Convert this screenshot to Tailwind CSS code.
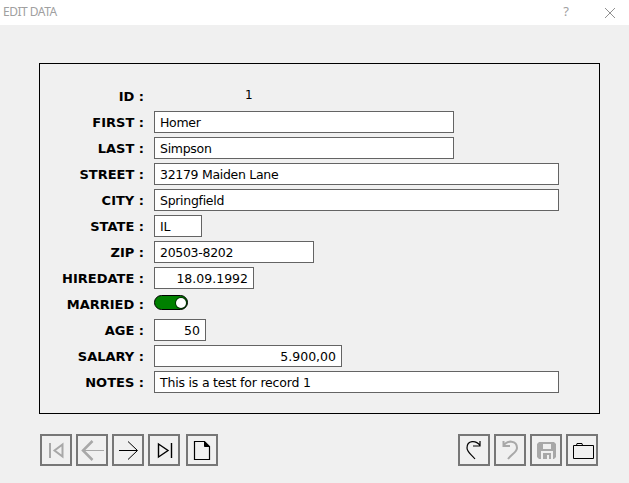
<!DOCTYPE html>
<html lang="en">
  <head>
    <meta charset="utf-8" />
    <title>Edit Data</title>
    <script src="https://cdn.jsdelivr.net/npm/@tailwindcss/browser@4"></script>
  </head>
  <body class="w-[629px] h-[483px] overflow-hidden bg-[#f0f0f0] text-black font-['DejaVu_Sans',sans-serif] text-[13px]">
    <header class="h-[25px] bg-white flex items-center pl-[3px] pb-[2px] text-[#a0a0a0] text-[12px] font-['Noto_Sans',sans-serif]">
      <span class="tracking-[-0.5px]">EDIT DATA</span>
      <span class="ml-auto mr-[36px] text-[13px]">?</span>
      <svg class="mr-[14px] mt-[2px]" width="10" height="10" viewBox="0 0 10 10" fill="none" stroke="#909090"><path d="M0 0L10 10M10 0L0 10" /></svg>
    </header>

    <main class="ml-[39px] mt-[38px] w-[561px] h-[351px] border border-black pt-[21px]">
      <div class="grid grid-cols-[104px_1fr] gap-x-[10px] gap-y-[4px] auto-rows-[22px] items-center">
        <label class="pt-[2px] text-right font-bold">ID :</label>
        <div class="pl-[91px] pb-[3px] text-[12px]">1</div>

        <label class="pt-[2px] text-right font-bold">FIRST :</label>
        <div class="w-[300px] h-[22px] bg-white border border-[#646464] px-[5px] leading-[22px] text-[12.5px] tracking-[-0.3px]">Homer</div>

        <label class="pt-[2px] text-right font-bold">LAST :</label>
        <div class="w-[300px] h-[22px] bg-white border border-[#646464] px-[5px] leading-[22px] text-[12.5px] tracking-[-0.3px]">Simpson</div>

        <label class="pt-[2px] text-right font-bold">STREET :</label>
        <div class="w-[405px] h-[22px] bg-white border border-[#646464] px-[5px] leading-[22px] text-[12.5px] tracking-[-0.3px]">32179 Maiden Lane</div>

        <label class="pt-[2px] text-right font-bold">CITY :</label>
        <div class="w-[405px] h-[22px] bg-white border border-[#646464] px-[5px] leading-[22px] text-[12.5px] tracking-[-0.3px]">Springfield</div>

        <label class="pt-[2px] text-right font-bold">STATE :</label>
        <div class="w-[48px] h-[22px] bg-white border border-[#646464] px-[5px] leading-[22px] text-[12.5px] tracking-[-0.3px]">IL</div>

        <label class="pt-[2px] text-right font-bold">ZIP :</label>
        <div class="w-[160px] h-[22px] bg-white border border-[#646464] px-[5px] leading-[22px] text-[12.5px] tracking-[-0.3px]">20503-8202</div>

        <label class="pt-[2px] text-right font-bold">HIREDATE :</label>
        <div class="w-[100px] h-[22px] bg-white border border-[#646464] px-[5px] leading-[22px] text-[12.5px] text-right">18.09.1992</div>

        <label class="pt-[2px] text-right font-bold">MARRIED :</label>
        <div class="w-[34px] h-[15px] mb-[3px] rounded-full bg-[#008000] border border-black flex items-center justify-end pr-[1px]">
          <span class="w-[10px] h-[10px] rounded-full bg-white ring-1 ring-black/60"></span>
        </div>

        <label class="pt-[2px] text-right font-bold">AGE :</label>
        <div class="w-[52px] h-[22px] bg-white border border-[#646464] px-[5px] leading-[22px] text-[12.5px] text-right">50</div>

        <label class="pt-[2px] text-right font-bold">SALARY :</label>
        <div class="w-[188px] h-[22px] bg-white border border-[#646464] px-[5px] leading-[22px] text-[12.5px] text-right">5.900,00</div>

        <label class="pt-[2px] text-right font-bold">NOTES :</label>
        <div class="w-[405px] h-[22px] bg-white border border-[#646464] px-[5px] leading-[22px] text-[12.5px] tracking-[-0.2px]">This is a test for record 1</div>
      </div>
    </main>

    <footer class="ml-[40px] mt-[20px] w-[558px] flex">
      <div class="flex gap-[4px]">
        <button class="w-[32px] h-[32px] border-2 border-[#777777] flex items-center justify-center">
          <svg width="20" height="21" viewBox="0 0 20 21" fill="none" stroke="#a8a8a8" stroke-width="2"><path d="M4 3V18M16.5 4.5V16.5L8.5 10.5Z" /></svg>
        </button>
        <button class="w-[32px] h-[32px] border-2 border-[#777777] flex items-center justify-center">
          <svg width="24" height="21" viewBox="0 0 24 21" fill="none" stroke="#a8a8a8"><path d="M4 10.5H24" /><path d="M12.5 1L3 10.5L12.5 20" stroke-width="2.5" /></svg>
        </button>
        <button class="w-[32px] h-[32px] border-2 border-[#777777] flex items-center justify-center">
          <svg width="24" height="21" viewBox="0 0 24 21" fill="none" stroke="#000"><path d="M3 10.5H21M12 1.5L21.5 10.5L12 19.5" /></svg>
        </button>
        <button class="w-[32px] h-[32px] border-2 border-[#777777] flex items-center justify-center">
          <svg width="20" height="21" viewBox="0 0 20 21" fill="none" stroke="#000" stroke-width="1.4"><path d="M4.5 4V17L14 10.5ZM17.5 3V18" /></svg>
        </button>
        <button class="ml-[2px] w-[32px] h-[32px] border-2 border-[#777777] flex items-center justify-center">
          <svg width="18" height="22" viewBox="0 0 18 22" fill="none" stroke="#000"><path d="M1.5 2.5H11.5L16.5 7.5V20.5H1.5Z" stroke-width="1.2" /><path d="M11.5 2.5V7.5H16.5" fill="#000" /></svg>
        </button>
      </div>
      <div class="ml-auto flex gap-[4px]">
        <button class="w-[32px] h-[32px] border-2 border-[#777777] flex items-center justify-center">
          <svg width="22" height="22" viewBox="0 0 22 22" fill="none" stroke="#000" stroke-width="1.2"><path d="M17 6.5C13 1 4 1 4 9C4 13 8 15 12 20M17 2V7H10" /></svg>
        </button>
        <button class="w-[32px] h-[32px] border-2 border-[#777777] flex items-center justify-center">
          <svg width="22" height="22" viewBox="0 0 22 22" fill="none" stroke="#a8a8a8" stroke-width="2"><path d="M4.5 6.5C8 1 18 1 18 9C18 13 13 15 9 20M4.5 2V7H11" /></svg>
        </button>
        <button class="w-[32px] h-[32px] border-2 border-[#777777] flex items-center justify-center">
          <svg width="20" height="20" viewBox="0 0 20 20"><path fill="#a8a8a8" d="M3 2H18L20 4V17L18 19H3L1 17V4Z" /><path fill="#f0f0f0" d="M7 4H15V9H7ZM5 11H17V19H15V13H7V19H5ZM11 15H13V19H11Z" /></svg>
        </button>
        <button class="w-[32px] h-[32px] border-2 border-[#777777] flex items-center justify-center">
          <svg width="24" height="18" viewBox="0 0 24 18" fill="none" stroke="#000"><path d="M3.5 4.5H23.5V17.5H3.5ZM6.5 4.5L7 2.5H12L12.5 4.5" /></svg>
        </button>
      </div>
    </footer>
  </body>
</html>
